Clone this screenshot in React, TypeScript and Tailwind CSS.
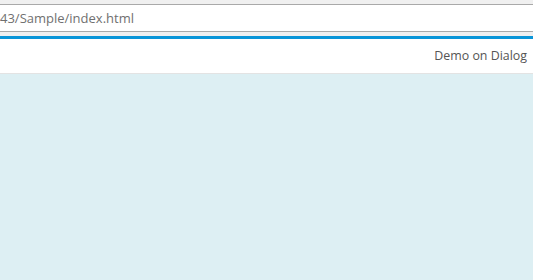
export default function App() {
  return (
    <div className="flex h-[280px] w-[533px] flex-col overflow-hidden bg-[#ddeff3] font-['Open_Sans',sans-serif]">
      {/* browser chrome */}
      <div className="h-[4px] bg-[#f0f0f0]" />
      <div className="flex h-[28px] items-center border-y border-[#a9a9a9] bg-white">
        <span className="text-[13px] leading-none text-[#707070]">43/Sample/index.html</span>
      </div>
      <div className="h-[4px] bg-[#f0f0f0]" />
      {/* page */}
      <div className="h-[3px] bg-[#0a95d8]" />
      <header className="flex h-[35px] items-center justify-end border-b border-[#e3e3e3] bg-white pr-[6px]">
        <span className="text-[12.4px] text-[#555555]">Demo on Dialog</span>
      </header>
      <main className="flex-1" />
    </div>
  );
}
